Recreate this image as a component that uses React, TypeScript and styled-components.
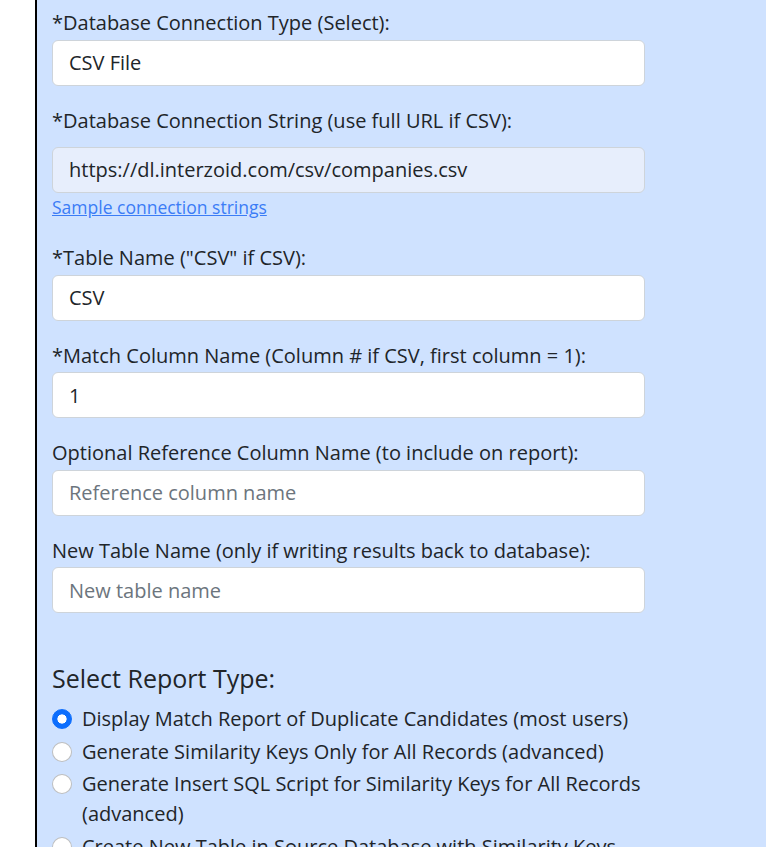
import {useState} from 'react';
import styled, {createGlobalStyle} from 'styled-components';

const GlobalStyle = createGlobalStyle`
  html, body {
    margin: 0;
    padding: 0;
    background: #ffffff;
  }
  body {
    font-family: 'Open Sans', 'Noto Sans', 'Liberation Sans', sans-serif;
    color: #212529;
  }
  * {
    box-sizing: border-box;
  }
`;

const Page = styled.div`
  display: flex;
  min-height: 100vh;
  overflow: hidden;
`;

const Gutter = styled.div`
  width: 35px;
  flex-shrink: 0;
  background: #ffffff;
`;

const Panel = styled.main`
  flex: 1;
  background: #cfe2ff;
  border-left: 2px solid #000000;
  padding: 8px 0 0 15px;
`;

const Form = styled.form`
  width: 593px;
`;

const Field = styled.div`
  margin-bottom: 20px;
`;

const Label = styled.label<{$gap?: number}>`
  display: block;
  font-size: 20px;
  line-height: 30px;
  margin-bottom: ${props => props.$gap ?? 1.5}px;
`;

const TextInput = styled.input<{$muted?: boolean}>`
  display: block;
  width: 100%;
  height: 46px;
  padding: 7px 16px;
  font-family: inherit;
  font-size: 20px;
  line-height: 30px;
  color: #212529;
  background: ${props => (props.$muted ? '#e7eefc' : '#ffffff')};
  border: 1px solid #ced4da;
  border-radius: 6px;
  outline: none;
  &::placeholder {
    color: #6c757d;
  }
`;

const HelpLink = styled.a`
  display: inline-block;
  margin-top: 1.5px;
  margin-bottom: 3px;
  font-size: 17.5px;
  line-height: 26px;
  color: #3b7cf6;
  text-decoration: underline;
`;

const SectionTitle = styled.h5`
  margin: 50px 0 11px;
  font-size: 25px;
  font-weight: 400;
  line-height: 30px;
`;

const Option = styled.label`
  display: block;
  position: relative;
  padding-left: 30px;
  margin-bottom: 2.5px;
  font-size: 20px;
  line-height: 30px;
  cursor: pointer;
`;

const Radio = styled.input`
  appearance: none;
  -webkit-appearance: none;
  position: absolute;
  left: 0;
  top: 5px;
  width: 20px;
  height: 20px;
  margin: 0;
  border-radius: 50%;
  border: 1px solid rgba(0, 0, 0, 0.25);
  background: #ffffff;
  &:checked {
    border-color: #0d6efd;
    background: radial-gradient(circle, #ffffff 0 4.3px, #0d6efd 4.9px);
  }
`;

const reportTypes = [
  'Display Match Report of Duplicate Candidates (most users)',
  'Generate Similarity Keys Only for All Records (advanced)',
  'Generate Insert SQL Script for Similarity Keys for All Records (advanced)',
  'Create New Table in Source Database with Similarity Keys (advanced)',
];

const App = () => {
  const [report, setReport] = useState(0);

  return (
    <Page>
      <GlobalStyle />
      <Gutter />
      <Panel>
        <Form onSubmit={e => e.preventDefault()}>
          <Field>
            <Label htmlFor="conntype">*Database Connection Type (Select):</Label>
            <TextInput id="conntype" defaultValue="CSV File" readOnly />
          </Field>
          <Field>
            <Label htmlFor="connstr" $gap={11}>
              *Database Connection String (use full URL if CSV):
            </Label>
            <TextInput
              id="connstr"
              $muted
              defaultValue="https://dl.interzoid.com/csv/companies.csv"
            />
            <HelpLink href="#">Sample connection strings</HelpLink>
          </Field>
          <Field>
            <Label htmlFor="table">*Table Name ("CSV" if CSV):</Label>
            <TextInput id="table" defaultValue="CSV" />
          </Field>
          <Field>
            <Label htmlFor="matchcol">
              *Match Column Name (Column # if CSV, first column = 1):
            </Label>
            <TextInput id="matchcol" defaultValue="1" />
          </Field>
          <Field>
            <Label htmlFor="refcol">
              Optional Reference Column Name (to include on report):
            </Label>
            <TextInput id="refcol" placeholder="Reference column name" />
          </Field>
          <Field>
            <Label htmlFor="newtable">
              New Table Name (only if writing results back to database):
            </Label>
            <TextInput id="newtable" placeholder="New table name" />
          </Field>

          <SectionTitle>Select Report Type:</SectionTitle>
          {reportTypes.map((text, i) => (
            <Option key={text}>
              <Radio
                type="radio"
                name="reporttype"
                checked={report === i}
                onChange={() => setReport(i)}
              />
              {text}
            </Option>
          ))}
        </Form>
      </Panel>
    </Page>
  );
};

export default App;
